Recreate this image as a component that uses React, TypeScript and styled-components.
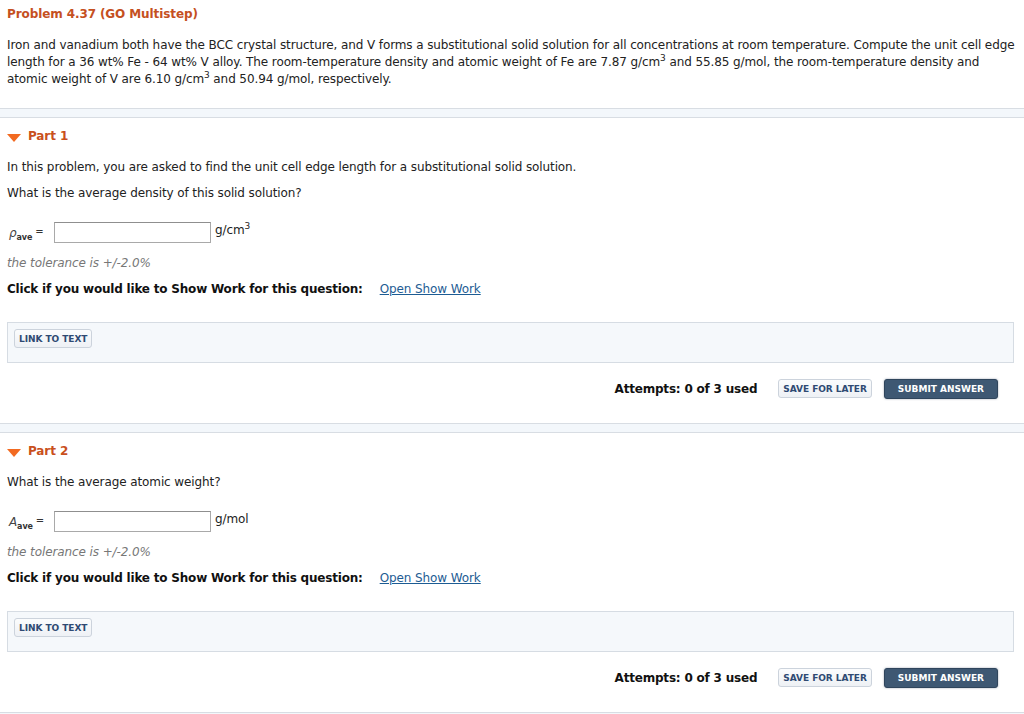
import React from "react";
import styled, { createGlobalStyle } from "styled-components";

const GlobalStyle = createGlobalStyle`
  html, body { margin: 0; padding: 0; background: #fff; }
  body {
    font-family: "DejaVu Sans", Verdana, sans-serif;
    font-size: 12px;
    letter-spacing: -0.1px;
    color: #222;
  }
`;

const Page = styled.div`
  width: 1024px;
  display: flex;
  flex-direction: column;
`;

const Header = styled.div`
  padding: 6px 7px 0 7px;
`;

const Title = styled.div`
  font-weight: bold;
  color: #c5501f;
  line-height: 17px;
`;

const Intro = styled.p`
  margin: 14px 0 0 0;
  line-height: 17px;
  white-space: nowrap;
  sup { font-size: 9px; line-height: 0; vertical-align: 5px; }
`;

const Band = styled.div<{ $top: number }>`
  margin-top: ${(p) => p.$top}px;
  height: 8px;
  background: #f3f7fb;
  border-top: 1px solid #d8dde3;
  border-bottom: 1px solid #d8dde3;
`;

const Part = styled.section`
  padding: 0 10px 0 7px;
  display: flex;
  flex-direction: column;
`;

const PartHeader = styled.div`
  margin-top: 10px;
  display: flex;
  align-items: center;
  gap: 7px;
  line-height: 17px;
  font-weight: bold;
  color: #c9501c;
`;

const Triangle = styled.span`
  width: 0;
  height: 0;
  border-left: 7px solid transparent;
  border-right: 7px solid transparent;
  border-top: 8px solid #f26a21;
  margin-top: 2px;
`;

const Line = styled.div<{ $top: number }>`
  margin-top: ${(p) => p.$top}px;
  line-height: 17px;
`;

const InputRow = styled.div<{ $top: number }>`
  margin-top: ${(p) => p.$top}px;
  display: flex;
  align-items: center;
  height: 21px;
`;

const VarLabel = styled.span`
  display: inline-flex;
  align-items: baseline;
  width: 47px;
  padding-left: 2px;
  box-sizing: border-box;
  color: #333;
`;

const VarSym = styled.span`
  font-style: italic;
  font-size: 12px;
  color: #444;
`;

const VarSub = styled.span`
  font-size: 8px;
  font-weight: bold;
  position: relative;
  top: 3px;
  margin-right: 3px;
`;

const VarEq = styled.span`
  font-size: 10px;
  position: relative;
  top: -2px;
`;

const AnswerInput = styled.input`
  width: 157px;
  height: 21px;
  box-sizing: border-box;
  border: 1px solid #a9a9a9;
  border-top-color: #8f8f8f;
  padding: 0 3px;
  margin: 0;
  font: inherit;
`;

const Unit = styled.span`
  margin-left: 4px;
  align-self: flex-start;
  margin-top: 1px;
  sup { font-size: 9px; line-height: 0; vertical-align: 5px; }
`;

const Tolerance = styled.div<{ $top: number }>`
  margin-top: ${(p) => p.$top}px;
  line-height: 17px;
  font-style: italic;
  color: #777;
`;

const ShowWork = styled.div`
  margin-top: 9px;
  line-height: 17px;
  display: flex;
  gap: 17px;
`;

const ShowWorkLabel = styled.span`
  font-weight: bold;
  color: #111;
  letter-spacing: -0.2px;
`;

const ShowWorkLink = styled.a`
  color: #1d5c93;
  text-decoration: underline;
  cursor: pointer;
`;

const LinkBox = styled.div`
  margin-top: 24px;
  background: #f5f8fb;
  border: 1px solid #d6dce3;
  padding: 6px 6px;
  display: flex;
  height: 41px;
  box-sizing: border-box;
  align-items: flex-start;
`;

const SmallButton = styled.button`
  font-family: "DejaVu Sans", Verdana, sans-serif;
  font-size: 9px;
  font-weight: bold;
  color: #2f4a73;
  background: linear-gradient(#fbfcfd, #eef1f5);
  border: 1px solid #ccd3dc;
  border-radius: 3px;
  height: 19px;
  padding: 0 4px;
  letter-spacing: -0.05px;
  cursor: pointer;
`;

const PrimaryButton = styled.button`
  font-family: "DejaVu Sans", Verdana, sans-serif;
  font-size: 9px;
  font-weight: bold;
  color: #fff;
  background: #3e5873;
  border: 1px solid #2f455c;
  border-radius: 3px;
  height: 20px;
  padding: 0 13px;
  box-shadow: 0 0 2px rgba(40, 60, 90, 0.5);
  cursor: pointer;
`;

const AttemptsRow = styled.div`
  margin-top: 15px;
  display: flex;
  justify-content: flex-end;
  align-items: center;
  padding-right: 16px;
  height: 21px;
`;

const Attempts = styled.span`
  font-weight: bold;
  color: #111;
  margin-right: 21px;
  letter-spacing: -0.2px;
`;

const SaveGap = styled.span`
  width: 12px;
`;

type PartProps = {
  n: number;
  intro?: string;
  question: string;
  sym: string;
  unit: React.ReactNode;
};

function PartBlock({ n, intro, question, sym, unit }: PartProps) {
  return (
    <Part>
      <PartHeader>
        <Triangle />
        <span>Part {n}</span>
      </PartHeader>
      {intro && <Line $top={14}>{intro}</Line>}
      <Line $top={intro ? 9 : 14}>{question}</Line>
      <InputRow $top={20}>
        <VarLabel>
          <VarSym>{sym}</VarSym>
          <VarSub>ave</VarSub>
          <VarEq>=</VarEq>
        </VarLabel>
        <AnswerInput type="text" />
        <Unit>{unit}</Unit>
      </InputRow>
      <Tolerance $top={12}>the tolerance is +/-2.0%</Tolerance>
      <ShowWork>
        <ShowWorkLabel>Click if you would like to Show Work for this question:</ShowWorkLabel>
        <ShowWorkLink>Open Show Work</ShowWorkLink>
      </ShowWork>
      <LinkBox>
        <SmallButton>LINK TO TEXT</SmallButton>
      </LinkBox>
      <AttemptsRow>
        <Attempts>Attempts: 0 of 3 used</Attempts>
        <SmallButton>SAVE FOR LATER</SmallButton>
        <SaveGap />
        <PrimaryButton>SUBMIT ANSWER</PrimaryButton>
      </AttemptsRow>
    </Part>
  );
}

export default function App() {
  return (
    <>
      <GlobalStyle />
      <Page>
        <Header>
          <Title>Problem 4.37 (GO Multistep)</Title>
          <Intro>
            Iron and vanadium both have the BCC crystal structure, and V forms a substitutional solid solution for all concentrations at room temperature. Compute the unit cell edge
            <br />
            length for a 36 wt% Fe - 64 wt% V alloy. The room-temperature density and atomic weight of Fe are 7.87 g/cm<sup>3</sup> and 55.85 g/mol, the room-temperature density and
            <br />
            atomic weight of V are 6.10 g/cm<sup>3</sup> and 50.94 g/mol, respectively.
          </Intro>
        </Header>
        <Band $top={20} />
        <PartBlock
          n={1}
          intro="In this problem, you are asked to find the unit cell edge length for a substitutional solid solution."
          question="What is the average density of this solid solution?"
          sym="ρ"
          unit={<>g/cm<sup>3</sup></>}
        />
        <Band $top={24} />
        <PartBlock
          n={2}
          question="What is the average atomic weight?"
          sym="A"
          unit="g/mol"
        />
        <Band $top={24} />
      </Page>
    </>
  );
}
